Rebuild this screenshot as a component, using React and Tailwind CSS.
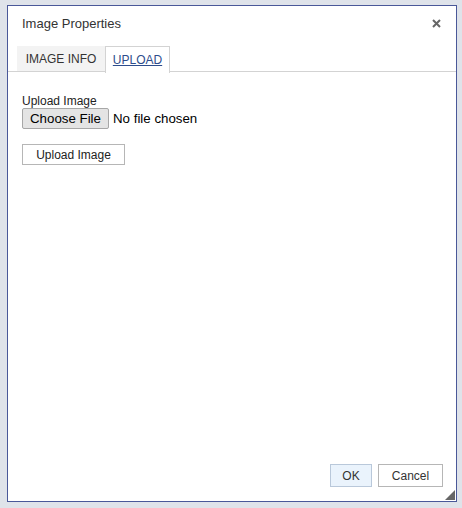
import React, { useState } from "react";

const tabs = ["IMAGE INFO", "UPLOAD"];

const App = () => {
  const [active, setActive] = useState(1);

  return (
    <div
      className="w-[462px] h-[508px] bg-[#dfe3ea] pl-[7px] pt-[5px] overflow-hidden"
      style={{ fontFamily: '"Liberation Sans", Arial, sans-serif' }}
    >
      {/* DIALOG */}
      <div className="relative w-[450px] h-[497px] bg-white border border-[#4a5899] flex flex-col">

        {/* TITLE */}
        <div className="flex items-center justify-between h-[40px] pl-[14px] pr-[14px] pb-[6px]">
          <span className="text-[13px] leading-[15px] text-[#333]">Image Properties</span>
          <svg width="9" height="9" viewBox="0 0 9 9" className="mr-[1px]">
            <path d="M1 1 L8 8 M8 1 L1 8" stroke="#666" strokeWidth="2" />
          </svg>
        </div>

        {/* TABS */}
        <div className="flex h-[26px] border-b border-[#d3d3d3] pl-[9px]">
          {tabs.map((t, i) => (
            <div
              key={t}
              onClick={() => setActive(i)}
              className={`flex items-center justify-center text-[12px] cursor-pointer ${
                active === i
                  ? "w-[65px] bg-white border border-b-0 border-[#d3d3d3] -mb-px h-[27px] text-[#2d4c8c] underline"
                  : "w-[88px] bg-[#f3f3f3] text-[#333]"
              }`}
            >
              {t}
            </div>
          ))}
        </div>

        {/* CONTENT */}
        <div className="flex-1 pl-[14px] pt-[22px]">
          <div className="text-[12px] leading-[14px] text-[#222]">Upload Image</div>
          <div className="flex items-center">
            <div className="w-[87px] h-[21px] flex items-center justify-center text-[13.3px] text-black bg-[#e4e4e4] border border-[#a7a7a7] rounded-[2px]">
              Choose File
            </div>
            <span className="ml-[4px] text-[13.3px] text-black">No file chosen</span>
          </div>
          <div className="mt-[15px] w-[103px] h-[21px] flex items-center justify-center text-[12px] text-[#222] bg-white border border-[#b6b6b6]">
            Upload Image
          </div>
        </div>

        {/* FOOTER */}
        <div className="flex justify-end gap-[6px] pr-[13px] pb-[14px]">
          <div className="w-[42px] h-[23px] flex items-center justify-center text-[12px] text-[#333] bg-[#eaf3fc] border border-[#b9c8da]">
            OK
          </div>
          <div className="w-[65px] h-[23px] flex items-center justify-center text-[12px] text-[#333] bg-white border border-[#b6b6b6]">
            Cancel
          </div>
        </div>

        {/* RESIZE GRIP */}
        <svg width="10" height="10" viewBox="0 0 10 10" className="absolute right-[1px] bottom-[1px]">
          <path d="M10 0 L10 10 L0 10 Z" fill="#666" />
        </svg>
      </div>
    </div>
  );
};

export default App;
